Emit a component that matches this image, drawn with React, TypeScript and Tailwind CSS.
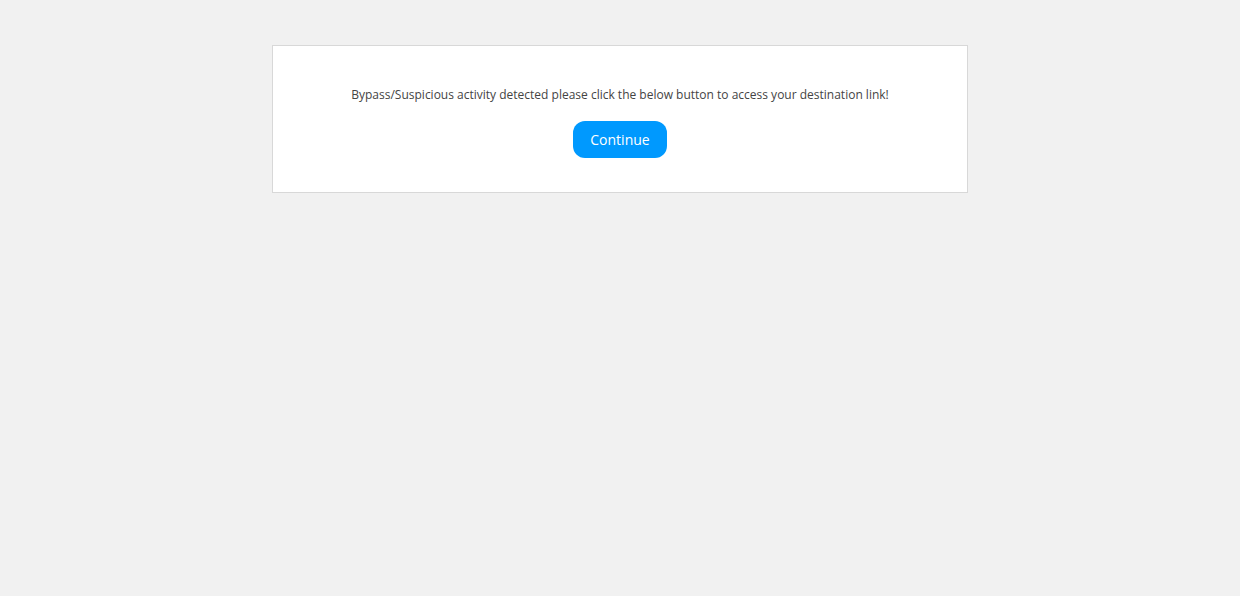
export default function App() {
  return (
    <div className="min-h-[596px] w-full bg-[#f1f1f1] pt-[45px]" style={{ fontFamily: '"Open Sans", "Noto Sans", sans-serif' }}>
      <div className="mx-auto w-[696px] border border-[#d8d8d8] bg-white pt-[40px] pb-[34px] flex flex-col items-center">
        <p className="text-[12px] leading-[18px] text-[#444]">
          Bypass/Suspicious activity detected please click the below button to access your destination link!
        </p>
        <button className="mt-[17px] h-[37px] w-[94px] rounded-[12px] bg-[#0099fe] text-[14px] text-white">
          Continue
        </button>
      </div>
    </div>
  );
}
